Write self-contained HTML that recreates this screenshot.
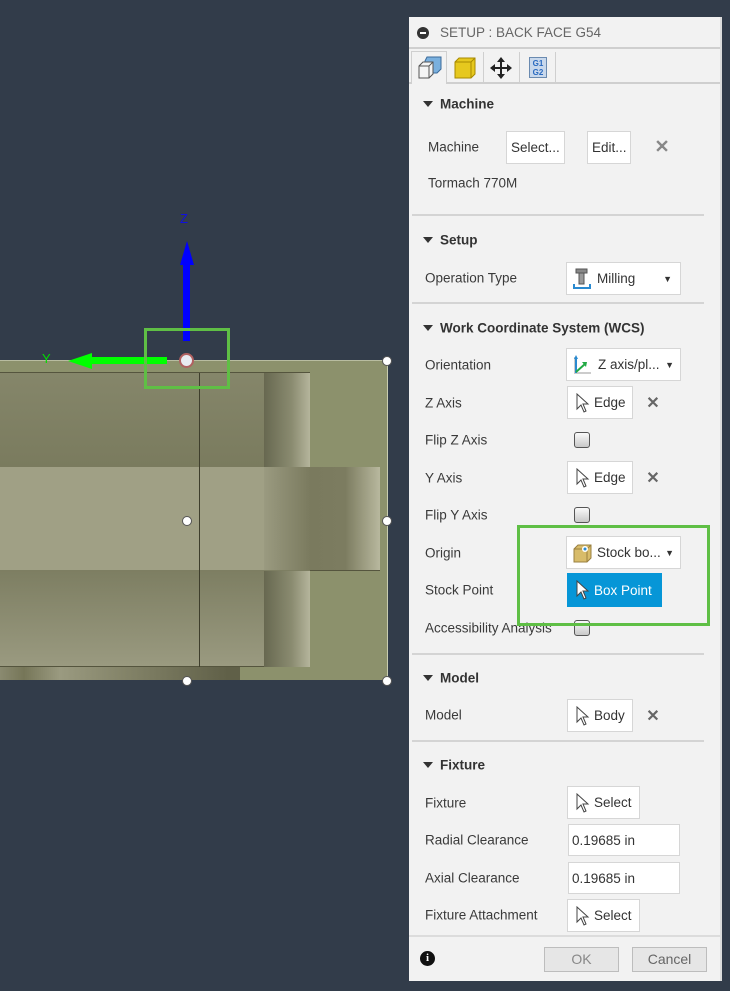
<!DOCTYPE html>
<html><head><meta charset="utf-8"><style>
*{margin:0;padding:0;box-sizing:border-box}
body{width:730px;height:991px;background:#323c4a;position:relative;overflow:hidden;font-family:"Liberation Sans",Arial,sans-serif;font-size:13.5px;color:#333}
.a{position:absolute}
.lbl{position:absolute;left:425px;transform:translateY(-50%);white-space:nowrap;color:#3a3a3a}
.hdr{position:absolute;left:440px;transform:translateY(-50%);font-weight:bold;color:#333;font-size:13.5px}
.tri{position:absolute;left:423px;width:0;height:0;border-left:5px solid transparent;border-right:5px solid transparent;border-top:6px solid #333}
.btn{position:absolute;background:#fff;border:1px solid #d6d6d6;display:flex;align-items:center;white-space:nowrap;color:#333}
.div{position:absolute;left:412px;width:292px;height:2px;background:#d4d4d4}
.x{position:absolute;font-size:16px;color:#666;font-weight:bold;transform:translate(-50%,-50%)}
.cb{position:absolute;left:574px;width:16px;height:16px;border:1.5px solid #555;border-radius:3px;background:linear-gradient(#fafafa,#c8c8c8)}
.dot{position:absolute;width:10px;height:10px;border-radius:50%;background:#fff;border:1px solid #555;transform:translate(-50%,-50%)}
</style></head><body>

<div class="a" style="left:0;top:360px;width:388px;height:320px;background:#8c916c;border-top:1px solid #b8bca0;border-right:1px solid #c8ccb0"></div>
<div class="a" style="left:0;top:372px;width:310px;height:96px;background:linear-gradient(180deg,#85866a,#7a7b5e);border-top:1px solid #55553e;border-bottom:1px solid #55553e"></div>
<div class="a" style="left:264px;top:373px;width:46px;height:94px;background:linear-gradient(90deg,#676850,#8a8b70 60%,#b5b59c)"></div>
<div class="a" style="left:0;top:467px;width:380px;height:104px;background:#a0a085;border-bottom:1px solid #55553e"></div>
<div class="a" style="left:264px;top:467px;width:116px;height:103px;background:linear-gradient(90deg,#9a9a80,#7a7a5e 40%,#7c7c60 70%,#b8b89e)"></div>
<div class="a" style="left:0;top:570px;width:310px;height:97px;background:linear-gradient(180deg,#7d7e62,#9a9a80);border-bottom:1px solid #55553e"></div>
<div class="a" style="left:264px;top:571px;width:46px;height:96px;background:linear-gradient(90deg,#676850,#8a8b70 60%,#b5b59c)"></div>
<div class="a" style="left:0;top:667px;width:240px;height:13px;background:linear-gradient(90deg,#8a8a70,#767658 10%,#9a9a80 25%,#85856a 50%,#606048 95%)"></div>
<div class="a" style="left:199px;top:373px;width:1px;height:294px;background:#3e3e2c"></div>
<div class="dot" style="left:387px;top:361px"></div>
<div class="dot" style="left:187px;top:521px"></div>
<div class="dot" style="left:387px;top:521px"></div>
<div class="dot" style="left:187px;top:681px"></div>
<div class="dot" style="left:387px;top:681px"></div>
<div class="a" style="left:183px;top:263px;width:7px;height:78px;background:#0000ff"></div>
<div class="a" style="left:180px;top:241px;width:0;height:0;border-left:7px solid transparent;border-right:7px solid transparent;border-bottom:24px solid #0000ff"></div>
<div class="a" style="left:180px;top:211px;color:#1010e0;font-size:13px">Z</div>
<div class="a" style="left:90px;top:357px;width:77px;height:7px;background:#00ff00"></div>
<div class="a" style="left:68px;top:353px;width:0;height:0;border-top:8px solid transparent;border-bottom:8px solid transparent;border-right:24px solid #00ff00"></div>
<div class="a" style="left:42px;top:351px;color:#00dd00;font-size:13px">Y</div>
<div class="a" style="left:179px;top:353px;width:15px;height:15px;border-radius:50%;background:#e8eaf0;border:2px solid #b06060"></div>
<div class="a" style="left:144px;top:328px;width:86px;height:61px;border:3px solid #5fbf45"></div>

<div class="a" style="left:409px;top:17px;width:313px;height:964px;background:#f2f2f2;border-right:2px solid #dcdcdc"></div>
<div class="a" style="left:409px;top:47px;width:311px;height:2px;background:#cfcfcf"></div>
<div class="a" style="left:417px;top:27px;width:12px;height:12px;border-radius:50%;background:#333"></div>
<div class="a" style="left:420px;top:32px;width:6px;height:2px;background:#fff"></div>
<div class="a" style="left:440px;top:25px;color:#666;font-size:13.5px">SETUP : BACK FACE G54</div>
<div class="a" style="left:409px;top:82px;width:311px;height:2px;background:#cfcfcf"></div>
<div class="a" style="left:411px;top:51px;width:36px;height:33px;background:#f2f2f2;border:1px solid #cfcfcf;border-bottom:none"></div>
<div class="a" style="left:483px;top:52px;width:1px;height:30px;background:#cfcfcf"></div>
<div class="a" style="left:519px;top:52px;width:1px;height:30px;background:#cfcfcf"></div>
<div class="a" style="left:555px;top:52px;width:1px;height:30px;background:#cfcfcf"></div>
<svg class="a" style="left:418px;top:54px" width="26" height="26" viewBox="0 0 26 26"><path d="M9 3h14v12l-4 4H7V7z" fill="#7ab0de" stroke="#3a6a9a"/><path d="M1 12l4-4h10v12l-4 4H1z" fill="#f4f4f4" stroke="#555"/><path d="M1 12h10v12M11 12l4-4" fill="none" stroke="#555"/></svg>
<svg class="a" style="left:454px;top:56px" width="24" height="24" viewBox="0 0 24 24"><path d="M1 6l4-4h16v16l-4 4H1z" fill="#e6c81e" stroke="#a88a00"/><path d="M1 6h16v16M17 6l4-4" fill="none" stroke="#a88a00"/></svg>
<svg class="a" style="left:490px;top:57px" width="22" height="22" viewBox="0 0 22 22" fill="#222"><path d="M10 4h2v14h-2zM4 10h14v2H4z"/><path d="M11 0l4 5H7zM11 22l4-5H7zM0 11l5-4v8zM22 11l-5-4v8z"/></svg>
<div class="a" style="left:529px;top:57px;width:18px;height:21px;background:#c8d8ec;border:1px solid #6a8ab0;font-size:8px;line-height:9px;color:#2a6ac0;text-align:center;padding-top:1px;font-weight:bold">G1<br>G2</div>

<div class="tri" style="top:101px"></div><div class="hdr" style="top:104px">Machine</div>
<div class="lbl" style="left:428px;top:147px">Machine</div>
<div class="btn" style="left:506px;top:131px;width:59px;height:33px;padding-left:4px">Select...</div>
<div class="btn" style="left:587px;top:131px;width:44px;height:33px;padding-left:4px">Edit...</div>
<div class="x" style="left:662px;top:147px;color:#888;font-size:18px">✕</div>
<div class="lbl" style="left:428px;top:183px">Tormach 770M</div>
<div class="div" style="top:214px"></div>

<div class="tri" style="top:237px"></div><div class="hdr" style="top:240px">Setup</div>
<div class="lbl" style="top:278px">Operation Type</div>
<div class="btn" style="left:566px;top:262px;width:115px;height:33px;padding-left:4px">
<svg width="22" height="24" viewBox="0 0 22 24"><rect x="5" y="2" width="11" height="4" fill="#888" stroke="#555"/><rect x="8" y="6" width="5" height="11" fill="#999" stroke="#555"/><path d="M3 17v4h16v-4" fill="none" stroke="#2a8ad0" stroke-width="2"/></svg>
<span style="margin-left:4px">Milling</span><span style="position:absolute;right:8px;font-size:9px">▼</span></div>
<div class="div" style="top:302px"></div>

<div class="tri" style="top:325px"></div><div class="hdr" style="top:328px">Work Coordinate System (WCS)</div>
<div class="lbl" style="top:365px">Orientation</div>
<div class="btn" style="left:566px;top:348px;width:115px;height:33px;padding-left:6px">
<svg width="22" height="24" viewBox="0 0 22 24"><path d="M2 4v16h16" fill="none" stroke="#ccc" stroke-width="2"/><path d="M3 20V4" stroke="#2a8ad0" stroke-width="2"/><path d="M1 6l2-4 2 4z" fill="#2a8ad0"/><path d="M3 19l9-8" stroke="#22aa44" stroke-width="2"/><path d="M9 9l5 0-1 5z" fill="#22aa44"/></svg>
<span style="margin-left:3px">Z axis/pl...</span><span style="position:absolute;right:6px;font-size:9px">▼</span></div>

<div class="lbl" style="top:403px">Z Axis</div>
<div class="btn" style="left:567px;top:386px;width:66px;height:33px;padding-left:8px"><svg width="14" height="20" viewBox="0 0 14 20"><path d="M1 1v15l4-4 3 7 2-1-3-7h5z" fill="#fff" stroke="#444"/></svg><span style="margin-left:4px">Edge</span></div>
<div class="x" style="left:653px;top:403px">✕</div>
<div class="lbl" style="top:440px">Flip Z Axis</div>
<div class="cb" style="top:432px"></div>
<div class="lbl" style="top:478px">Y Axis</div>
<div class="btn" style="left:567px;top:461px;width:66px;height:33px;padding-left:8px"><svg width="14" height="20" viewBox="0 0 14 20"><path d="M1 1v15l4-4 3 7 2-1-3-7h5z" fill="#fff" stroke="#444"/></svg><span style="margin-left:4px">Edge</span></div>
<div class="x" style="left:653px;top:478px">✕</div>
<div class="lbl" style="top:515px">Flip Y Axis</div>
<div class="cb" style="top:507px"></div>
<div class="lbl" style="top:553px">Origin</div>
<div class="btn" style="left:566px;top:536px;width:115px;height:33px;padding-left:6px">
<svg width="20" height="20" viewBox="0 0 20 20"><path d="M1 6l4-4h13v13l-4 4H1z" fill="#d8bc6a" stroke="#9a8040"/><path d="M1 6h13v13M14 6l4-4" fill="none" stroke="#9a8040"/><circle cx="12" cy="6" r="3" fill="#fff"/><circle cx="12" cy="6" r="1.5" fill="#2a8ad0"/></svg>
<span style="margin-left:4px">Stock bo...</span><span style="position:absolute;right:6px;font-size:9px">▼</span></div>
<div class="lbl" style="top:590px">Stock Point</div>
<div class="a" style="left:567px;top:573px;width:95px;height:34px;background:#0696d7;display:flex;align-items:center;padding-left:9px;color:#fff"><svg width="14" height="20" viewBox="0 0 14 20"><path d="M1 1v15l4-4 3 7 2-1-3-7h5z" fill="#fff" stroke="#444"/></svg><span style="margin-left:4px">Box Point</span></div>
<div class="lbl" style="top:628px">Accessibility Analysis</div>
<div class="cb" style="top:620px"></div>
<div class="a" style="left:517px;top:525px;width:193px;height:101px;border:3px solid #5fbf45"></div>
<div class="div" style="top:653px"></div>

<div class="tri" style="top:675px"></div><div class="hdr" style="top:678px">Model</div>
<div class="lbl" style="top:715px">Model</div>
<div class="btn" style="left:567px;top:699px;width:66px;height:33px;padding-left:8px"><svg width="14" height="20" viewBox="0 0 14 20"><path d="M1 1v15l4-4 3 7 2-1-3-7h5z" fill="#fff" stroke="#444"/></svg><span style="margin-left:4px">Body</span></div>
<div class="x" style="left:653px;top:716px">✕</div>
<div class="div" style="top:740px"></div>

<div class="tri" style="top:762px"></div><div class="hdr" style="top:765px">Fixture</div>
<div class="lbl" style="top:803px">Fixture</div>
<div class="btn" style="left:567px;top:786px;width:73px;height:33px;padding-left:8px"><svg width="14" height="20" viewBox="0 0 14 20"><path d="M1 1v15l4-4 3 7 2-1-3-7h5z" fill="#fff" stroke="#444"/></svg><span style="margin-left:4px">Select</span></div>
<div class="lbl" style="top:840px">Radial Clearance</div>
<div class="btn" style="left:568px;top:824px;width:112px;height:32px;padding-left:3px">0.19685 in</div>
<div class="lbl" style="top:878px">Axial Clearance</div>
<div class="btn" style="left:568px;top:862px;width:112px;height:32px;padding-left:3px">0.19685 in</div>
<div class="lbl" style="top:915px">Fixture Attachment</div>
<div class="btn" style="left:567px;top:899px;width:73px;height:33px;padding-left:8px"><svg width="14" height="20" viewBox="0 0 14 20"><path d="M1 1v15l4-4 3 7 2-1-3-7h5z" fill="#fff" stroke="#444"/></svg><span style="margin-left:4px">Select</span></div>

<div class="a" style="left:409px;top:935px;width:311px;height:2px;background:#dcdcdc"></div>
<div class="a" style="left:420px;top:951px;width:15px;height:15px;border-radius:50%;background:#111;color:#fff;font-size:11px;font-weight:bold;text-align:center;line-height:15px;font-family:'Liberation Serif',serif">i</div>
<div class="a" style="left:544px;top:947px;width:75px;height:25px;background:#e6e6e6;border:1px solid #bdbdbd;color:#888;text-align:center;line-height:23px;font-size:14px">OK</div>
<div class="a" style="left:632px;top:947px;width:75px;height:25px;background:#e6e6e6;border:1px solid #bdbdbd;color:#666;text-align:center;line-height:23px;font-size:14px">Cancel</div>
</body></html>
